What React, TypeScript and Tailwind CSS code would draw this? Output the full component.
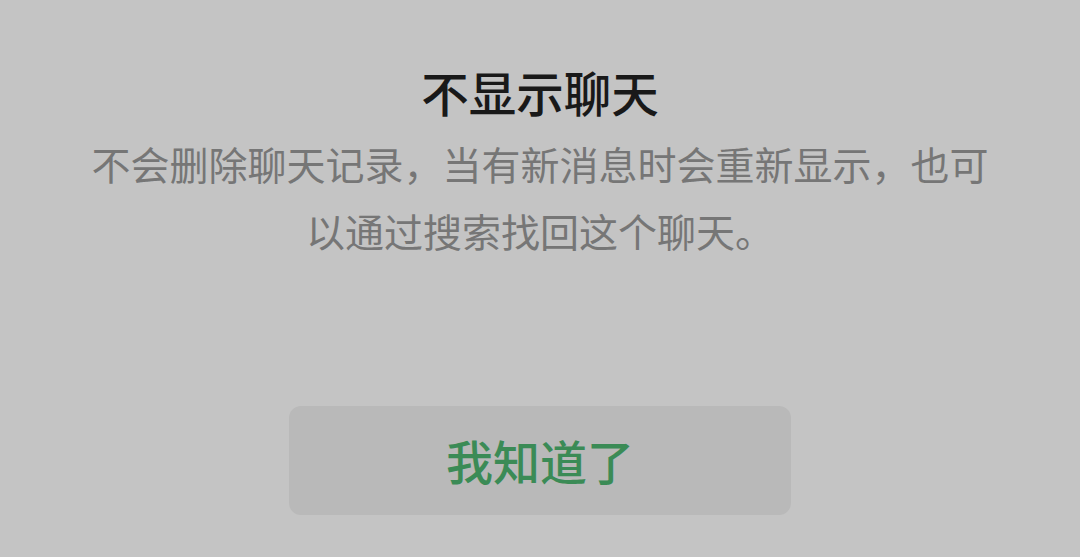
export default function App() {
  return (
    <div
      className="flex h-[557px] w-full flex-col items-center bg-[#c4c4c4] pt-[68px]"
      style={{ fontFamily: '"Noto Sans CJK SC", "Noto Sans", sans-serif' }}
    >
      <h1 className="text-[47.5px] leading-[47px] font-medium text-[#191919]">不显示聊天</h1>
      <p className="mt-[15px] text-center text-[39px] leading-[67px] whitespace-nowrap text-[#767676]">
        <span className="block">不会删除聊天记录，当有新消息时会重新显示，也可</span>
        <span className="block">以通过搜索找回这个聊天。</span>
      </p>
      <button
        type="button"
        className="mt-[142px] flex h-[109px] w-[502px] items-center justify-center rounded-xl bg-[#b9b9b9] text-[47px] font-medium text-[#3b8b56]"
      >
        我知道了
      </button>
    </div>
  );
}
